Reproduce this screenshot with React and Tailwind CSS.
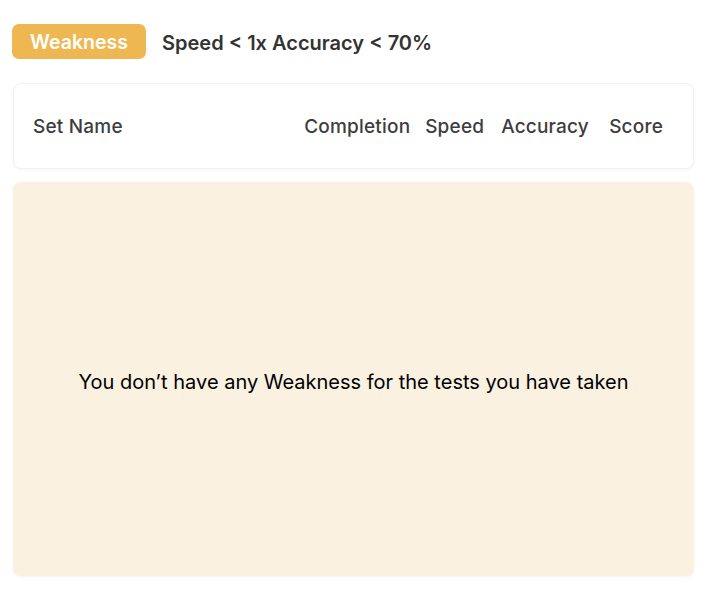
import React from 'react';

const columns = [
  { label: 'Completion', width: 'w-[121px]' },
  { label: 'Speed', width: 'w-[76px]' },
  { label: 'Accuracy', width: 'w-[108px]' },
  { label: 'Score', width: 'w-auto' },
];

const App = () => {
  return (
    <div
      className="min-h-[598px] bg-white pt-[24px] pl-[12px] pr-[17px]"
      style={{ fontFamily: 'Inter, "Noto Sans", sans-serif' }}
    >
      <div className="flex items-center gap-[16px]">
        <span className="flex h-[35px] w-[134px] items-center justify-center rounded-[7px] bg-[#efb752] pt-[2px] text-[19.5px] font-semibold text-white">
          Weakness
        </span>
        <span className="pt-[3px] text-[20px] font-semibold text-[#333333]">
          Speed &lt; 1x Accuracy &lt; 70%
        </span>
      </div>

      <div className="ml-[1px] mt-[24px] flex h-[86px] items-center rounded-[8px] border border-[#f0f0f0] bg-white pl-[19px] pr-[30px] pt-[3px] shadow-[0_1px_3px_rgba(0,0,0,0.04)]">
        <div className="flex-1 text-[19px] font-medium tracking-[0.2px] text-[#3d3d3d]">Set Name</div>
        {columns.map((c) => (
          <div key={c.label} className={`${c.width} text-[19px] font-medium tracking-[0.2px] text-[#3d3d3d]`}>
            {c.label}
          </div>
        ))}
      </div>

      <div className="ml-[1px] mt-[13px] flex h-[394px] items-center justify-center rounded-[8px] bg-[#faf1e1] pt-[6px] shadow-[0_1px_3px_rgba(0,0,0,0.05)]">
        <p className="text-[20px] text-black">
          You don’t have any Weakness for the tests you have taken
        </p>
      </div>
    </div>
  );
};

export default App;
